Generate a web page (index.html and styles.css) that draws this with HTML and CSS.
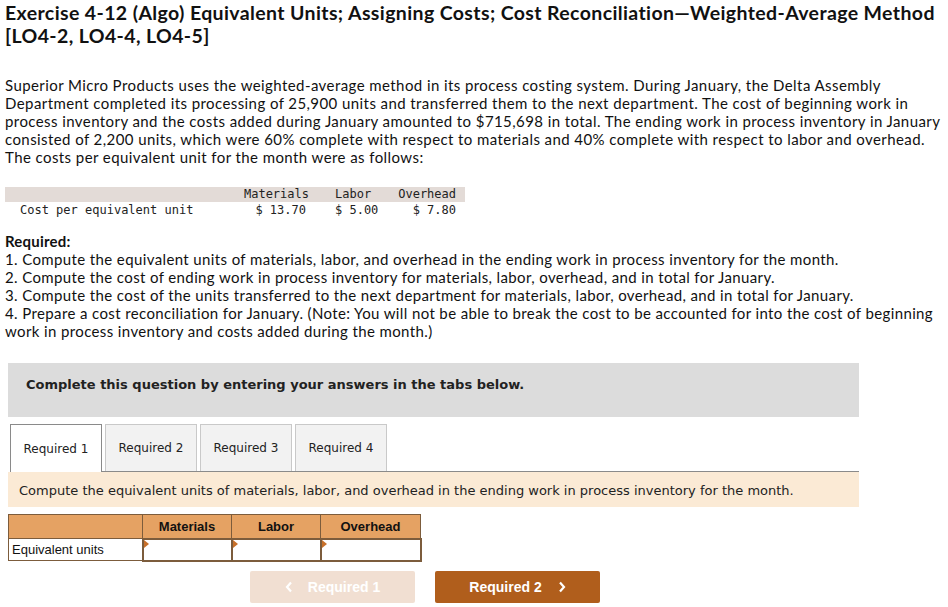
FILE: index.html
```html
<!DOCTYPE html>
<html>
<head>
<meta charset="utf-8">
<link rel="stylesheet" href="styles.css">
</head>
<body>
<div class="page">
  <h1 class="title">Exercise 4-12 (Algo) Equivalent Units; Assigning Costs; Cost Reconciliation—Weighted-Average Method [LO4-2, LO4-4, LO4-5]</h1>
  <p class="intro">Superior Micro Products uses the weighted-average method in its process costing system. During January, the Delta Assembly Department completed its processing of 25,900 units and transferred them to the next department. The cost of beginning work in process inventory and the costs added during January amounted to $715,698 in total. The ending work in process inventory in January consisted of 2,200 units, which were 60% complete with respect to materials and 40% complete with respect to labor and overhead. The costs per equivalent unit for the month were as follows:</p>

  <table class="costs">
    <thead>
      <tr><th class="c-label"></th><th class="c-mat">Materials</th><th class="c-lab">Labor</th><th class="c-ovh">Overhead</th></tr>
    </thead>
    <tbody>
      <tr><td class="c-label">Cost per equivalent unit</td><td class="c-mat">$ 13.70</td><td class="c-lab">$ 5.00</td><td class="c-ovh">$ 7.80</td></tr>
    </tbody>
  </table>

  <div class="required">
    <div class="req-head">Required:</div>
    <div>1. Compute the equivalent units of materials, labor, and overhead in the ending work in process inventory for the month.</div>
    <div>2. Compute the cost of ending work in process inventory for materials, labor, overhead, and in total for January.</div>
    <div>3. Compute the cost of the units transferred to the next department for materials, labor, overhead, and in total for January.</div>
    <div>4. Prepare a cost reconciliation for January. (Note: You will not be able to break the cost to be accounted for into the cost of beginning work in process inventory and costs added during the month.)</div>
  </div>

  <div class="instructions">Complete this question by entering your answers in the tabs below.</div>

  <div class="tabs">
    <div class="tab active">Required 1</div>
    <div class="tab">Required 2</div>
    <div class="tab">Required 3</div>
    <div class="tab">Required 4</div>
  </div>
  <div class="prompt">Compute the equivalent units of materials, labor, and overhead in the ending work in process inventory for the month.</div>

  <table class="answer">
    <thead>
      <tr><th class="a-label"></th><th class="a-col">Materials</th><th class="a-col">Labor</th><th class="a-col a-last">Overhead</th></tr>
    </thead>
    <tbody>
      <tr>
        <td class="a-label">Equivalent units</td>
        <td class="a-input"><span class="flag"></span></td>
        <td class="a-input"><span class="flag"></span></td>
        <td class="a-input"><span class="flag"></span></td>
      </tr>
    </tbody>
  </table>

  <div class="nav">
    <div class="btn btn-prev"><svg class="chev chev-l" width="8" height="12" viewBox="0 0 8 12"><polyline points="6,1.5 2,6 6,10.5" fill="none" stroke="#fff" stroke-width="2.2"/></svg>Required 1</div>
    <div class="btn btn-next">Required 2<svg class="chev chev-r" width="8" height="12" viewBox="0 0 8 12"><polyline points="2,1.5 6,6 2,10.5" fill="none" stroke="#fff" stroke-width="2.2"/></svg></div>
  </div>
</div>
</body>
</html>
```

FILE: styles.css
```css
* { box-sizing: border-box; }
html, body { margin: 0; padding: 0; background: #fff; }
body { font-family: Lato, "Open Sans", sans-serif; color: #111; }
.page { padding: 1px 0 0 5px; width: 948px; }

.title {
  margin: 0;
  font-family: Lato, sans-serif;
  font-weight: 700;
  font-size: 19.5px;
  line-height: 23px;
  letter-spacing: 0.38px;
  color: #111;
  width: 938px;
}

.intro {
  margin: 29px 0 0 0;
  font-size: 15px;
  line-height: 18px;
  letter-spacing: 0.42px;
  width: 943px;
}

.costs {
  margin-top: 21px;
  border-collapse: collapse;
  font-family: "DejaVu Sans Mono", "Liberation Mono", monospace;
  font-size: 12px;
  color: #222;
}
.costs th { background: #e3dbd7; font-weight: 400; height: 15px; padding: 0; line-height: 15px; }
.costs td { height: 17px; padding: 0; line-height: 17px; }
.costs .c-label { width: 235px; text-align: left; padding-left: 15px; }
.costs .c-mat { width: 73px; text-align: right; }
.costs th.c-mat { padding-right: 4px; }
.costs td.c-mat { padding-right: 7px; }
.costs .c-lab { width: 77px; text-align: left; padding-left: 22px; }
.costs .c-ovh { width: 75px; text-align: right; padding-right: 9px; }

.required {
  margin-top: 13px;
  font-size: 15px;
  line-height: 18px;
  letter-spacing: 0.38px;
  width: 943px;
}
.req-head { font-weight: 700; letter-spacing: 0.2px; }

.instructions {
  margin: 23px 0 0 3px;
  width: 851px;
  height: 54px;
  background: #dcdcdc;
  padding: 14px 0 0 18px;
  font-family: "DejaVu Sans", Verdana, sans-serif;
  font-weight: 700;
  font-size: 13px;
  color: #222;
}

.tabs {
  display: flex;
  gap: 3px;
  margin: 7px 0 0 5px;
  width: 849px;
  border-bottom: 1px solid #8a8a8a;
  height: 48px;
}
.tab {
  width: 92px;
  height: 47px;
  background: #f2f2f2;
  border: 1px solid #c9c9c9;
  border-bottom: none;
  font-family: "DejaVu Sans", Verdana, sans-serif;
  font-size: 12px;
  color: #222;
  display: flex;
  align-items: center;
  justify-content: center;
}
.tab.active {
  background: #fff;
  border-color: #8a8a8a;
  height: 48px;
  margin-bottom: -1px;
}

.prompt {
  margin-left: 3px;
  width: 851px;
  height: 35px;
  background: #fbead5;
  padding: 11px 0 0 11px;
  font-family: "DejaVu Sans", Verdana, sans-serif;
  font-size: 13px;
  color: #222;
}

.answer {
  margin: 7px 0 0 3px;
  border-collapse: collapse;
  font-family: "Liberation Sans", Arial, sans-serif;
  font-size: 13px;
  color: #111;
}
.answer th {
  background: #e5a263;
  border: 1px solid #7c5c3c;
  height: 24px;
  padding: 0;
  font-weight: 700;
  text-align: center;
}
.answer td { border: 1px solid #7c5c3c; height: 22px; padding: 0; }
.answer .a-label { width: 134px; text-align: left; padding-left: 3px; }
.answer .a-col { width: 89px; }
.answer .a-last { width: 100px; }
.answer .a-input {
  position: relative;
  border: 2px solid #7c5c3c;
  background: #fff;
}
.flag {
  position: absolute;
  left: 0;
  top: 0;
  width: 0;
  height: 0;
  border-top: 4px solid transparent;
  border-bottom: 4px solid transparent;
  border-left: 5px solid #c8702a;
}

.nav {
  display: flex;
  gap: 20px;
  margin: 9px 0 0 245px;
}
.btn {
  width: 165px;
  height: 32px;
  border-radius: 2px;
  display: flex;
  align-items: center;
  justify-content: center;
  font-family: "Liberation Sans", Arial, sans-serif;
  font-weight: 700;
  font-size: 14px;
  color: #fff;
}
.btn-prev { background: #f1dfd2; }
.btn-next { background: #b05e1c; }
.chev { display: block; }
.chev-l { margin-right: 15px; }
.chev-r { margin-left: 16px; }
```
